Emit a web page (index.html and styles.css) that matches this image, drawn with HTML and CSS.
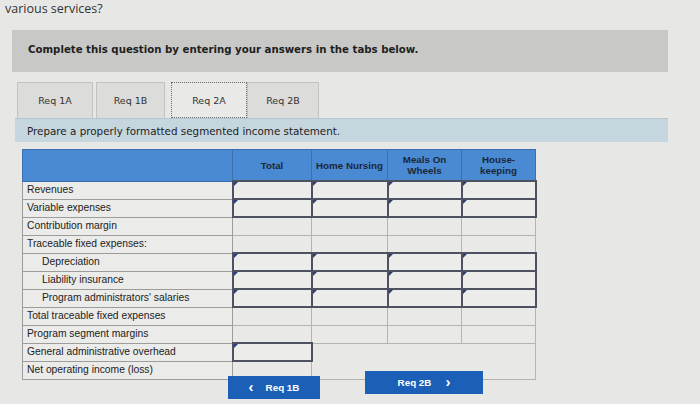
FILE: index.html
```html
<!DOCTYPE html>
<html>
<head>
<meta charset="utf-8">
<link rel="stylesheet" href="styles.css">
</head>
<body>
<div class="page">
  <div class="question">various services?</div>
  <div class="wrap">
    <div class="instr">Complete this question by entering your answers in the tabs below.</div>
    <div class="tabs">
      <div class="tab">Req 1A</div>
      <div class="tab">Req 1B</div>
      <div class="tab active">Req 2A</div>
      <div class="tab">Req 2B</div>
    </div>
    <div class="prompt">Prepare a properly formatted segmented income statement.</div>
    <table class="stmt">
      <colgroup>
        <col class="c-label"><col class="c-total"><col class="c-hn"><col class="c-mw"><col class="c-hk">
      </colgroup>
      <thead>
        <tr>
          <th></th>
          <th>Total</th>
          <th>Home Nursing</th>
          <th>Meals On<br>Wheels</th>
          <th>House-<br>keeping</th>
        </tr>
      </thead>
      <tbody>
        <tr><td class="lbl">Revenues</td><td class="in"></td><td class="in"></td><td class="in"></td><td class="in"></td></tr>
        <tr><td class="lbl">Variable expenses</td><td class="in"></td><td class="in"></td><td class="in"></td><td class="in"></td></tr>
        <tr><td class="lbl">Contribution margin</td><td class="pl"></td><td class="pl"></td><td class="pl"></td><td class="pl"></td></tr>
        <tr><td class="lbl">Traceable fixed expenses:</td><td class="pl"></td><td class="pl"></td><td class="pl"></td><td class="pl"></td></tr>
        <tr><td class="lbl ind">Depreciation</td><td class="in"></td><td class="in"></td><td class="in"></td><td class="in"></td></tr>
        <tr><td class="lbl ind">Liability insurance</td><td class="in"></td><td class="in"></td><td class="in"></td><td class="in"></td></tr>
        <tr><td class="lbl ind">Program administrators' salaries</td><td class="in"></td><td class="in"></td><td class="in"></td><td class="in"></td></tr>
        <tr><td class="lbl">Total traceable fixed expenses</td><td class="pl"></td><td class="pl"></td><td class="pl"></td><td class="pl"></td></tr>
        <tr><td class="lbl">Program segment margins</td><td class="pl"></td><td class="pl"></td><td class="pl"></td><td class="pl"></td></tr>
        <tr><td class="lbl">General administrative overhead</td><td class="in"></td><td class="blank" colspan="3" rowspan="2"></td></tr>
        <tr><td class="lbl">Net operating income (loss)</td><td class="pl"></td></tr>
      </tbody>
    </table>
    <div class="nav">
      <button class="btn prev"><span class="chev">&#x2039;</span>Req 1B</button>
      <button class="btn next">Req 2B<span class="chev">&#x203A;</span></button>
    </div>
  </div>
</div>
</body>
</html>
```
FILE: styles.css
```css
html, body {
  margin: 0;
  padding: 0;
  background: #e7e7e5;
}
.page {
  width: 700px;
  height: 404px;
  overflow: hidden;
  font-family: "DejaVu Sans", Verdana, sans-serif;
  color: #2a2a2a;
}
.question {
  font-family: "Open Sans", "Liberation Sans", sans-serif;
  font-size: 12.5px;
  color: #333;
  padding: 1px 0 0 5px;
  height: 29px;
  line-height: 15px;
}
.wrap {
  margin-left: 12px;
  width: 656px;
}
.instr {
  background: #c8c8c6;
  height: 42px;
  line-height: 40px;
  padding-left: 16px;
  font-weight: bold;
  font-size: 10.2px;
  color: #1e1e1e;
}
.tabs {
  display: flex;
  margin-top: 10px;
  padding-left: 5px;
  gap: 3px;
  height: 36px;
}
.tab {
  width: 76px;
  height: 36px;
  box-sizing: border-box;
  background: #dcdcda;
  border: 1px solid #c2c2c0;
  border-bottom: none;
  display: flex;
  align-items: center;
  justify-content: center;
  font-size: 9.5px;
  color: #333;
}
.tab:nth-child(2) { width: 69px; }
.tab.active {
  background: #e9e9e8;
  border: 1.5px dotted #6a6a6a;
  margin-left: 3px;
  width: 76px;
}
.tab:nth-child(4) { width: 72px; margin-left: -3px; }
.prompt {
  background: #c6d6df;
  height: 23px;
  line-height: 24px;
  margin-left: 3px;
  padding-left: 12px;
  font-size: 10.35px;
  color: #222;
  border-top: 1px solid #b6c6d0;
}
.stmt {
  margin: 7px 0 0 10px;
  border-collapse: collapse;
  table-layout: fixed;
  width: 513px;
  font-family: "Liberation Sans", Arial, sans-serif;
}
.c-label { width: 210px; }
.c-total { width: 79px; }
.c-hn { width: 76px; }
.c-mw { width: 74px; }
.c-hk { width: 74px; }
.stmt th {
  background: #4a8ad3;
  height: 30px;
  padding: 0;
  font-size: 9.8px;
  font-weight: bold;
  color: #1b2738;
  line-height: 11px;
  border: 1px solid #3a6fb0;
  text-align: center;
}
.stmt tbody tr {
  height: 18px;
}
.stmt td {
  height: 14px;
  padding: 0;
  line-height: 14px;
  background: #ebebea;
  border: 1px solid #a8a8a6;
}
.stmt td.lbl {
  font-size: 10.3px;
  color: #222;
  padding-left: 4px;
  white-space: nowrap;
  border-color: #9c9c9a;
}
.stmt td.lbl.ind {
  padding-left: 19px;
}
.stmt td.in {
  border: 2px solid #4d5260;
  background: #ececeb;
  position: relative;
}
.stmt td.in::before {
  content: "";
  position: absolute;
  left: 0;
  top: 0;
  border-left: 4px solid #2c3e7a;
  border-bottom: 4px solid transparent;
}
.stmt td.pl {
  border: 1px solid #b4b4b2;
  background: #e9e9e8;
}
.stmt td.blank {
  background: #e8e8e6;
  border: 1px solid #b4b4b2;
}
.nav {
  display: flex;
  gap: 45px;
  margin: 0 0 0 216px;
  position: relative;
  top: -4px;
}
.btn {
  height: 23px;
  border: none;
  background: #1b60b6;
  color: #ffffff;
  font-family: "Liberation Sans", Arial, sans-serif;
  font-weight: bold;
  font-size: 9.8px;
  display: flex;
  align-items: center;
  justify-content: center;
  padding: 0;
}
.btn.prev { width: 92px; }
.btn.next { width: 118px; margin-top: -5px; }
.chev {
  font-size: 15px;
  font-weight: bold;
  line-height: 10px;
}
.prev .chev { margin-right: 12px; }
.next .chev { margin-left: 14px; }
```
